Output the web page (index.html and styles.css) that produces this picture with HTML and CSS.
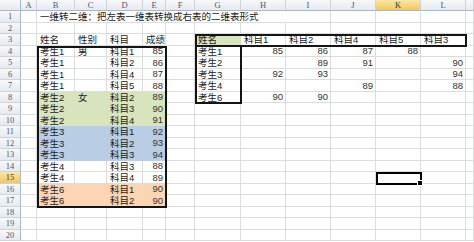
FILE: index.html
```html
<!DOCTYPE html>
<html lang="zh-CN">
<head>
<meta charset="utf-8">
<title>一维转二维</title>
<link rel="stylesheet" href="styles.css">
</head>
<body>
<div class="stack">
  <div class="sheet">
    <!-- header row -->
    <div class="corner"></div>
    <div class="ch">A</div><div class="ch">B</div><div class="ch">C</div><div class="ch">D</div><div class="ch">E</div><div class="ch">F</div><div class="ch">G</div><div class="ch">H</div><div class="ch">I</div><div class="ch">J</div><div class="ch sel">K</div><div class="ch">L</div><div class="ch"></div>

    <!-- 1 -->
    <div class="rh">1</div>
    <div class="c"></div><div class="c t title">一维转二维：把左表一维表转换成右表的二维表形式</div><div class="c"></div><div class="c"></div><div class="c"></div><div class="c"></div><div class="c"></div>
    <!-- 2 -->
    <div class="rh">2</div>
    <div class="c"></div><div class="c"></div><div class="c"></div><div class="c"></div><div class="c"></div><div class="c"></div><div class="c"></div><div class="c"></div><div class="c"></div><div class="c"></div><div class="c"></div><div class="c"></div><div class="c"></div>
    <!-- 3 -->
    <div class="rh">3</div>
    <div class="c"></div><div class="c t">姓名</div><div class="c t">性别</div><div class="c t">科目</div><div class="c t">成绩</div><div class="c"></div><div class="c t green">姓名</div><div class="c t">科目1</div><div class="c t">科目2</div><div class="c t">科目4</div><div class="c t">科目5</div><div class="c t">科目3</div><div class="c"></div>
    <!-- 4 -->
    <div class="rh">4</div>
    <div class="c"></div><div class="c t">考生1</div><div class="c t">男</div><div class="c t">科目1</div><div class="c n">85</div><div class="c"></div><div class="c t">考生1</div><div class="c n">85</div><div class="c n">86</div><div class="c n">87</div><div class="c n">88</div><div class="c"></div><div class="c"></div>
    <!-- 5 -->
    <div class="rh">5</div>
    <div class="c"></div><div class="c t">考生1</div><div class="c"></div><div class="c t">科目2</div><div class="c n">86</div><div class="c"></div><div class="c t">考生2</div><div class="c"></div><div class="c n">89</div><div class="c n">91</div><div class="c"></div><div class="c n">90</div><div class="c"></div>
    <!-- 6 -->
    <div class="rh">6</div>
    <div class="c"></div><div class="c t">考生1</div><div class="c"></div><div class="c t">科目4</div><div class="c n">87</div><div class="c"></div><div class="c t">考生3</div><div class="c n">92</div><div class="c n">93</div><div class="c"></div><div class="c"></div><div class="c n">94</div><div class="c"></div>
    <!-- 7 -->
    <div class="rh">7</div>
    <div class="c"></div><div class="c t">考生1</div><div class="c"></div><div class="c t">科目5</div><div class="c n">88</div><div class="c"></div><div class="c t">考生4</div><div class="c"></div><div class="c"></div><div class="c n">89</div><div class="c"></div><div class="c n">88</div><div class="c"></div>
    <!-- 8 -->
    <div class="rh">8</div>
    <div class="c"></div><div class="c t green">考生2</div><div class="c t green">女</div><div class="c t green">科目2</div><div class="c n green">89</div><div class="c"></div><div class="c t">考生6</div><div class="c n">90</div><div class="c n">90</div><div class="c"></div><div class="c"></div><div class="c"></div><div class="c"></div>
    <!-- 9 -->
    <div class="rh">9</div>
    <div class="c"></div><div class="c t green">考生2</div><div class="c green"></div><div class="c t green">科目3</div><div class="c n green">90</div><div class="c"></div><div class="c"></div><div class="c"></div><div class="c"></div><div class="c"></div><div class="c"></div><div class="c"></div><div class="c"></div>
    <!-- 10 -->
    <div class="rh">10</div>
    <div class="c"></div><div class="c t green">考生2</div><div class="c green"></div><div class="c t green">科目4</div><div class="c n green">91</div><div class="c"></div><div class="c"></div><div class="c"></div><div class="c"></div><div class="c"></div><div class="c"></div><div class="c"></div><div class="c"></div>
    <!-- 11 -->
    <div class="rh">11</div>
    <div class="c"></div><div class="c t blue">考生3</div><div class="c blue"></div><div class="c t blue">科目1</div><div class="c n blue">92</div><div class="c"></div><div class="c"></div><div class="c"></div><div class="c"></div><div class="c"></div><div class="c"></div><div class="c"></div><div class="c"></div>
    <!-- 12 -->
    <div class="rh">12</div>
    <div class="c"></div><div class="c t blue">考生3</div><div class="c blue"></div><div class="c t blue">科目2</div><div class="c n blue">93</div><div class="c"></div><div class="c"></div><div class="c"></div><div class="c"></div><div class="c"></div><div class="c"></div><div class="c"></div><div class="c"></div>
    <!-- 13 -->
    <div class="rh">13</div>
    <div class="c"></div><div class="c t blue">考生3</div><div class="c blue"></div><div class="c t blue">科目3</div><div class="c n blue">94</div><div class="c"></div><div class="c"></div><div class="c"></div><div class="c"></div><div class="c"></div><div class="c"></div><div class="c"></div><div class="c"></div>
    <!-- 14 -->
    <div class="rh">14</div>
    <div class="c"></div><div class="c t">考生4</div><div class="c"></div><div class="c t">科目3</div><div class="c n">88</div><div class="c"></div><div class="c"></div><div class="c"></div><div class="c"></div><div class="c"></div><div class="c"></div><div class="c"></div><div class="c"></div>
    <!-- 15 -->
    <div class="rh sel">15</div>
    <div class="c"></div><div class="c t">考生4</div><div class="c"></div><div class="c t">科目4</div><div class="c n">89</div><div class="c"></div><div class="c"></div><div class="c"></div><div class="c"></div><div class="c"></div><div class="c"></div><div class="c"></div><div class="c"></div>
    <!-- 16 -->
    <div class="rh">16</div>
    <div class="c"></div><div class="c t orange">考生6</div><div class="c orange"></div><div class="c t orange">科目1</div><div class="c n orange">90</div><div class="c"></div><div class="c"></div><div class="c"></div><div class="c"></div><div class="c"></div><div class="c"></div><div class="c"></div><div class="c"></div>
    <!-- 17 -->
    <div class="rh">17</div>
    <div class="c"></div><div class="c t orange">考生6</div><div class="c orange"></div><div class="c t orange">科目2</div><div class="c n orange">90</div><div class="c"></div><div class="c"></div><div class="c"></div><div class="c"></div><div class="c"></div><div class="c"></div><div class="c"></div><div class="c"></div>
    <!-- 18 -->
    <div class="rh">18</div>
    <div class="c"></div><div class="c"></div><div class="c"></div><div class="c"></div><div class="c"></div><div class="c"></div><div class="c"></div><div class="c"></div><div class="c"></div><div class="c"></div><div class="c"></div><div class="c"></div><div class="c"></div>
    <!-- 19 -->
    <div class="rh">19</div>
    <div class="c"></div><div class="c"></div><div class="c"></div><div class="c"></div><div class="c"></div><div class="c"></div><div class="c"></div><div class="c"></div><div class="c"></div><div class="c"></div><div class="c"></div><div class="c"></div><div class="c"></div>
    <!-- 20 -->
    <div class="rh">20</div>
    <div class="c"></div><div class="c"></div><div class="c"></div><div class="c"></div><div class="c"></div><div class="c"></div><div class="c"></div><div class="c"></div><div class="c"></div><div class="c"></div><div class="c"></div><div class="c"></div><div class="c"></div>
  </div>
  <div class="overlay">
    <div class="frame f-left"></div>
    <div class="frame f-head"></div>
    <div class="frame f-names"></div>
    <div class="frame f-sel"></div>
  </div>
</div>
</body>
</html>
```

FILE: styles.css
```css
html, body {
  margin: 0;
  padding: 0;
  background: #ffffff;
  overflow: hidden;
}

body {
  width: 474px;
  height: 242px;
  font-family: "Liberation Sans", "Noto Sans CJK SC", sans-serif;
}

.stack {
  display: grid;
  width: 474px;
  overflow: hidden;
}

.sheet,
.overlay {
  grid-area: 1 / 1;
  display: grid;
  grid-template-columns: 21px 16px 38px 32px 36px 23px 29px 46px 45px 45px 45px 45px 45px 8px;
  grid-template-rows: 11px repeat(20, 11.5px);
}

.overlay {
  pointer-events: none;
}

.corner,
.ch,
.rh {
  box-sizing: border-box;
  background: linear-gradient(#f7f8fa, #e6eaef);
  color: #4d5b6d;
  font-family: "Liberation Serif", "DejaVu Serif", serif;
  font-size: 8.5px;
  display: flex;
  align-items: center;
  justify-content: center;
  overflow: hidden;
}

.corner {
  border-right: 1px solid #a8b8cb;
  border-bottom: 1px solid #a8b8cb;
}

.ch {
  border-right: 1px solid #cfd4db;
  border-bottom: 1px solid #a8b8cb;
}

.rh {
  border-right: 1px solid #a8b8cb;
  border-bottom: 1px solid #cfd4db;
}

.ch.sel,
.rh.sel {
  background: linear-gradient(#fae7a8, #f2c65f);
  color: #3c3a30;
}

.c {
  box-sizing: border-box;
  border-right: 1px solid #dadcdf;
  border-bottom: 1px solid #dadcdf;
  font-size: 9.5px;
  color: #1c1c1c;
  white-space: nowrap;
  overflow: hidden;
  display: flex;
  align-items: center;
  padding: 0 2px 0 3px;
}

.c.n {
  justify-content: flex-end;
  padding: 0 2px 0 0;
  color: #333333;
}

.title {
  grid-column: span 7;
  border-right-color: transparent;
}

.green {
  background: #d7e4bd;
  border-color: #d7e4bd;
}

.blue {
  background: #b9cde5;
  border-color: #b9cde5;
}

.orange {
  background: #fcd5b5;
  border-color: #fcd5b5;
}

.frame {
  box-sizing: border-box;
  border: 2px solid #141414;
  margin: 0 -1px -1px 0;
}

.f-left {
  grid-column: 3 / 7;
  grid-row: 5 / 19;
}

.f-head {
  grid-column: 8 / 14;
  grid-row: 4 / 5;
}

.f-names {
  grid-column: 8 / 9;
  grid-row: 5 / 10;
  margin-top: -1px;
}

.f-sel {
  grid-column: 12 / 13;
  grid-row: 16 / 17;
  position: relative;
  border-color: #000000;
}

.f-sel::after {
  content: "";
  position: absolute;
  right: -3px;
  bottom: -3px;
  width: 4px;
  height: 4px;
  background: #000000;
  border: 1px solid #ffffff;
}
```
